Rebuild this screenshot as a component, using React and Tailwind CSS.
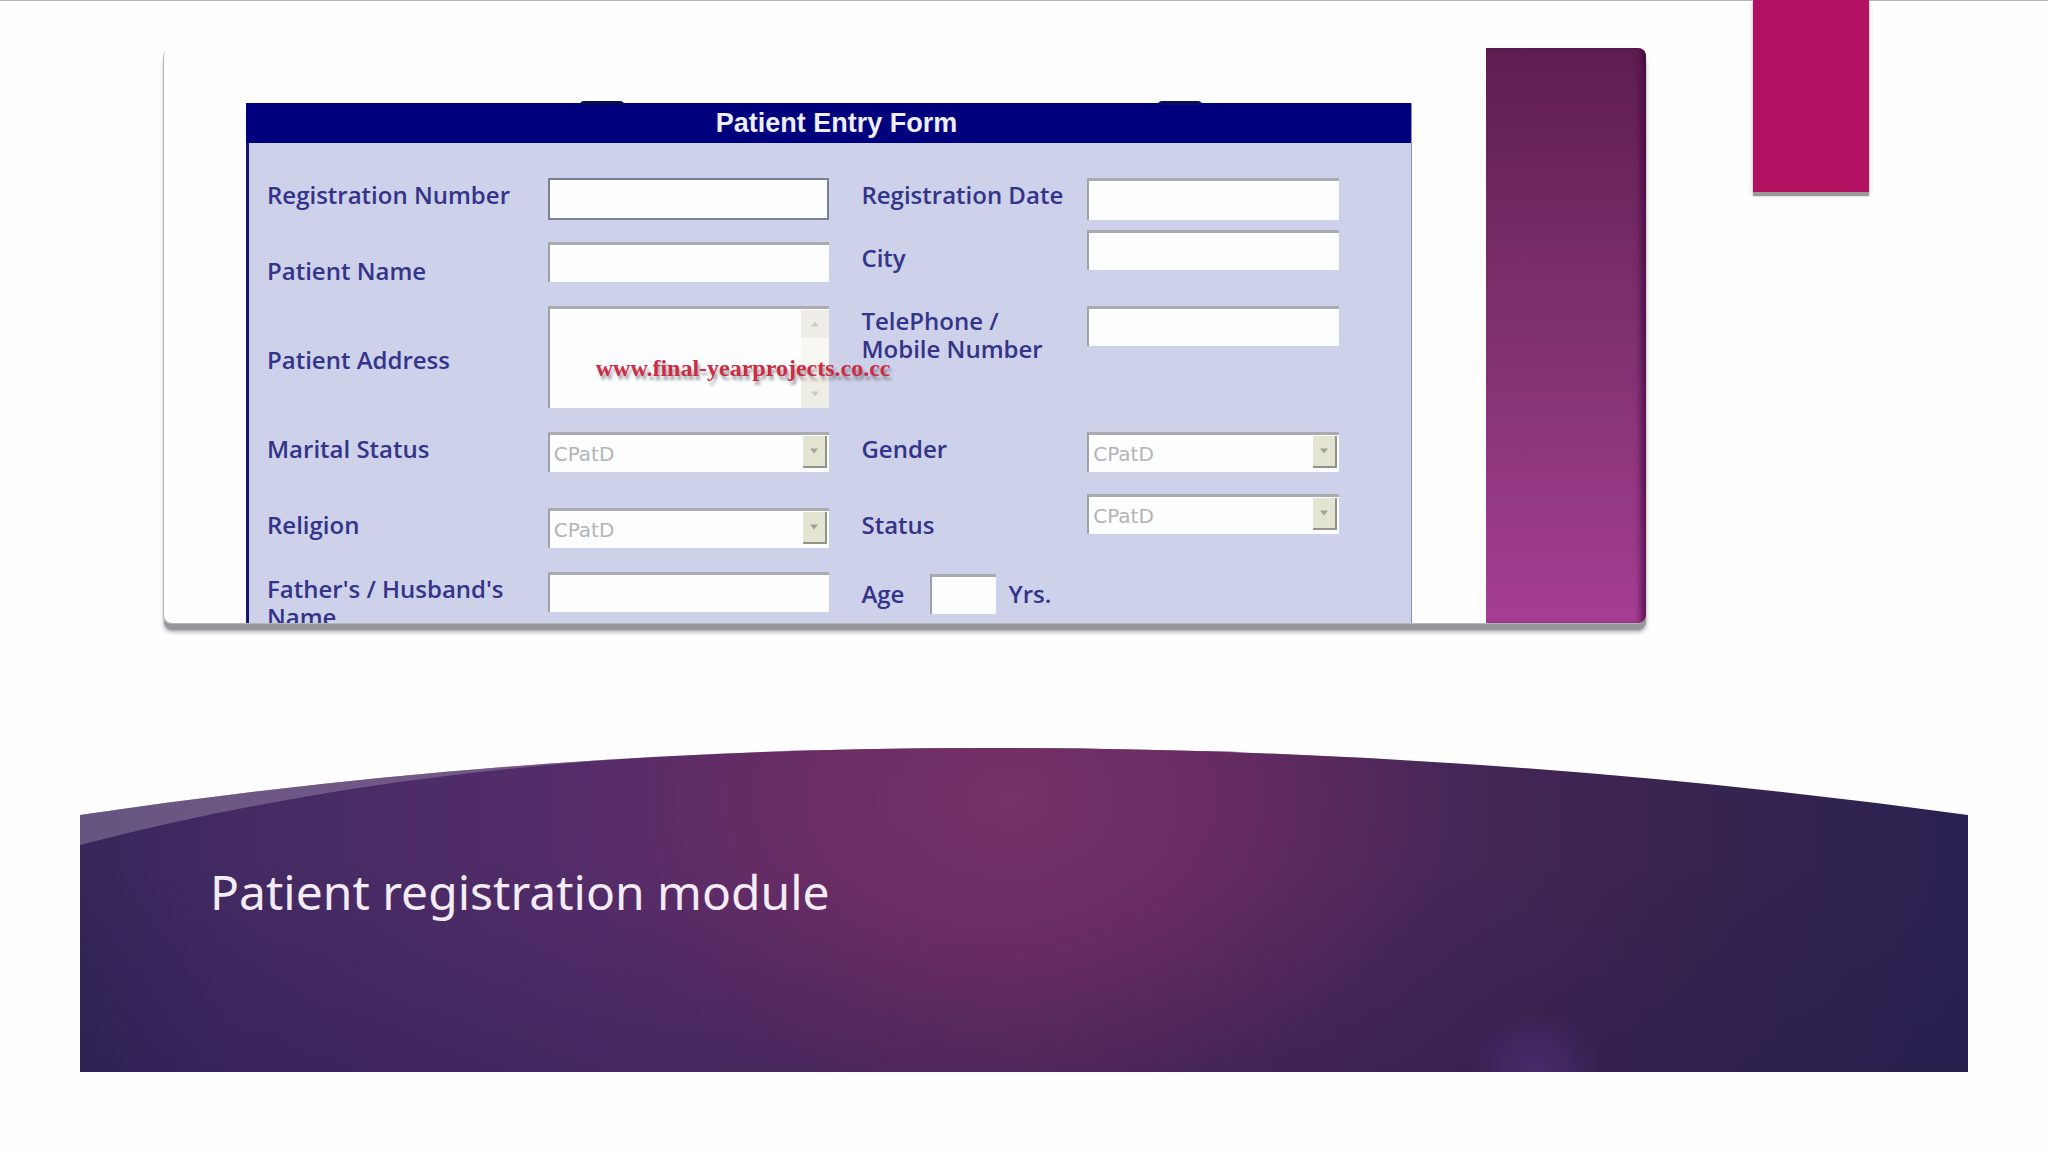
import React from "react";

const labelText =
  "block font-['Open_Sans',sans-serif] text-[24px] leading-7 font-semibold text-[#34348a] whitespace-nowrap";
const box =
  "block w-full bg-[#fdfeff] border-t-[3px] border-l-2 border-t-[#a9abae] border-l-[#9fa1a6] outline-none";

function Label({ htmlFor, className = "", children }) {
  return (
    <label htmlFor={htmlFor} className={`${labelText} ${className}`}>
      {children}
    </label>
  );
}

function Field({ id, className = "h-10" }) {
  return <input id={id} type="text" className={`${box} ${className}`} />;
}

function Dropdown({ id, className = "" }) {
  return (
    <div className={`relative ${className}`}>
      <select
        id={id}
        disabled
        className={`${box} h-10 appearance-none pl-1 font-['DejaVu_Sans',sans-serif] text-[20px] text-[#b4b4b4] opacity-100`}
      >
        <option>CPatD</option>
      </select>
      <span className="pointer-events-none absolute top-1 right-0.5 bottom-1 flex w-6 items-center justify-center border-r-2 border-b-2 border-[#92938a] bg-[#e3e4d2]">
        <svg viewBox="0 0 8 5" className="h-1.5 w-2">
          <path d="M0 0h8L4 5z" fill="#a2a394" />
        </svg>
      </span>
    </div>
  );
}

function ScrollTrack() {
  return (
    <span className="pointer-events-none absolute top-1 right-0 bottom-0 flex w-7 flex-col items-center justify-between bg-[#f8f7f2]">
      <span className="flex h-7 w-full items-center justify-center bg-[#efede7]">
        <svg viewBox="0 0 8 5" className="h-1.5 w-2">
          <path d="M0 5h8L4 0z" fill="#cfcdc6" />
        </svg>
      </span>
      <span className="flex h-7 w-full items-center justify-center bg-[#efeee4]">
        <svg viewBox="0 0 8 5" className="h-1.5 w-2">
          <path d="M0 0h8L4 5z" fill="#cfcdc0" />
        </svg>
      </span>
    </span>
  );
}

function EntryForm() {
  return (
    <form className="relative mt-[55px] ml-[82px] min-w-0 flex-1 border-r border-l-[3px] border-r-[#8b93b8] border-l-[#17176e] bg-[#cdd1e9]">
      <span className="absolute -top-0.5 left-[28.5%] h-1 w-11 rounded-t-sm bg-[#0b0b55]" />
      <span className="absolute -top-0.5 left-[78.2%] h-1 w-11 rounded-t-sm bg-[#0b0b62]" />
      <h2 className="-ml-[3px] bg-[#00007f] pl-4 text-center font-['Liberation_Sans',sans-serif] text-[27px] leading-10 font-bold text-[#eeeefa]">
        Patient Entry Form
      </h2>
      <div className="grid grid-cols-[563fr_478fr] gap-8 pr-[72px] pl-[18px]">
        <div className="grid grid-cols-[281fr_282fr]">
          <div className="flex flex-col pt-[38px]">
            <Label htmlFor="reg-number">Registration Number</Label>
            <Label htmlFor="patient-name" className="mt-12">Patient Name</Label>
            <Label htmlFor="address" className="mt-[61px]">Patient Address</Label>
            <Label htmlFor="marital" className="mt-[61px]">Marital Status</Label>
            <Label htmlFor="religion" className="mt-12">Religion</Label>
            <Label htmlFor="father" className="mt-9">
              Father's / Husband's
              <br />
              Name
            </Label>
          </div>
          <div className="flex flex-col pt-[35px]">
            <input
              id="reg-number"
              type="text"
              className="block h-[42px] w-full border-2 border-[#7c8094] bg-[#fdfeff] outline-none"
            />
            <Field id="patient-name" className="mt-[22px] h-10" />
            <div className="relative mt-6">
              <textarea id="address" className={`${box} h-[102px] resize-none`} />
              <ScrollTrack />
              <span className="absolute top-12 left-12 z-10 font-['Liberation_Serif',serif] text-[24px] leading-7 font-bold whitespace-nowrap text-[#cc2c44] [text-shadow:2px_4px_3px_rgba(70,70,80,0.5)]">
                www.final-yearprojects.co.cc
              </span>
            </div>
            <Dropdown id="marital" className="mt-6" />
            <Dropdown id="religion" className="mt-9" />
            <Field id="father" className="mt-6 h-10" />
          </div>
        </div>
        <div className="grid grid-cols-[226fr_252fr]">
          <div className="flex flex-col pt-[38px]">
            <Label htmlFor="reg-date">Registration Date</Label>
            <Label htmlFor="city" className="mt-[35px]">City</Label>
            <Label htmlFor="phone" className="mt-[35px]">
              TelePhone /
              <br />
              Mobile Number
            </Label>
            <Label htmlFor="gender" className="mt-[72px]">Gender</Label>
            <Label htmlFor="status" className="mt-12">Status</Label>
            <div className="mt-[35px] flex items-center">
              <Label htmlFor="age" className="w-[69px]">Age</Label>
              <Field id="age" className="h-10 max-w-[66px]" />
              <span className={`${labelText} ml-3`}>Yrs.</span>
            </div>
          </div>
          <div className="flex flex-col pt-[35px]">
            <Field id="reg-date" className="h-[42px]" />
            <Field id="city" className="mt-[10px] h-10" />
            <Field id="phone" className="mt-9 h-10" />
            <Dropdown id="gender" className="mt-[86px]" />
            <Dropdown id="status" className="mt-[22px]" />
          </div>
        </div>
      </div>
    </form>
  );
}

function BandBackdrop() {
  return (
    <svg
      viewBox="0 0 1887 324"
      preserveAspectRatio="none"
      className="absolute inset-0 h-full w-full"
      aria-hidden="true"
    >
      <defs>
        <linearGradient id="base" x1="0" x2="1" y1="0" y2="0">
          <stop offset="0" stopColor="#36265a" />
          <stop offset="0.08" stopColor="#432a63" />
          <stop offset="0.28" stopColor="#562d6a" />
          <stop offset="0.5" stopColor="#5f2c62" />
          <stop offset="0.68" stopColor="#4c275b" />
          <stop offset="0.85" stopColor="#382450" />
          <stop offset="1" stopColor="#2a2150" />
        </linearGradient>
        <linearGradient id="shade" x1="0" x2="0" y1="0" y2="1">
          <stop offset="0.35" stopColor="#1e1748" stopOpacity="0" />
          <stop offset="1" stopColor="#1e1748" stopOpacity="0.3" />
        </linearGradient>
        <radialGradient id="glow" gradientUnits="userSpaceOnUse" cx="0" cy="0" r="1" gradientTransform="translate(930 50) scale(440 310)">
          <stop offset="0" stopColor="#763168" stopOpacity="0.95" />
          <stop offset="0.45" stopColor="#702d64" stopOpacity="0.7" />
          <stop offset="1" stopColor="#6a2a62" stopOpacity="0" />
        </radialGradient>
        <radialGradient id="spot" gradientUnits="userSpaceOnUse" cx="0" cy="0" r="1" gradientTransform="translate(1455 324) scale(65 60)">
          <stop offset="0" stopColor="#4a2e72" stopOpacity="0.8" />
          <stop offset="1" stopColor="#4a2e72" stopOpacity="0" />
        </radialGradient>
        <clipPath id="arch">
          <path d="M0 67Q453 0 906 0Q1396 0 1887 67V324H0Z" />
        </clipPath>
      </defs>
      <g clipPath="url(#arch)">
        <rect width="1887" height="324" fill="url(#base)" />
        <rect width="1887" height="324" fill="url(#shade)" />
        <rect width="1887" height="324" fill="url(#glow)" />
        <rect width="1887" height="324" fill="url(#spot)" />
        <path d="M0 97C173 52 350 25 540 11V0H0Z" fill="#a08fb0" fillOpacity="0.45" />
      </g>
    </svg>
  );
}

export default function App() {
  return (
    <main className="min-h-screen border-t border-[#b4b4b4] bg-[#fefefe]">
      <div className="flex items-start pr-[179px] pl-41">
        <section className="mt-[47px] flex h-[575px] min-w-0 flex-1 overflow-hidden rounded-lg bg-[#fefefe] shadow-[-1px_1px_0_#b5b5b5,0_7px_1px_#97979b,0_9px_4px_#a8a8a8]">
          <EntryForm />
          <div className="ml-[74px] w-40 bg-linear-to-b from-[#5e1d51] via-[#80316f] to-[#a63e94] shadow-[inset_-8px_0_6px_-3px_rgba(60,5,60,0.7)]" />
        </section>
        <div className="-mt-px ml-[107px] h-48 w-29 bg-[#b21161] shadow-[0_4px_1px_#9a9a9a,0_2px_5px_#c8c8c8]" />
      </div>
      <section className="relative mx-20 mt-[125px] h-[324px] pt-[108px] pl-[130px]">
        <BandBackdrop />
        <h1 className="relative font-['Noto_Sans',sans-serif] text-[48px] leading-[72px] font-normal text-[#f3ebf5]">
          Patient registration module
        </h1>
      </section>
    </main>
  );
}
